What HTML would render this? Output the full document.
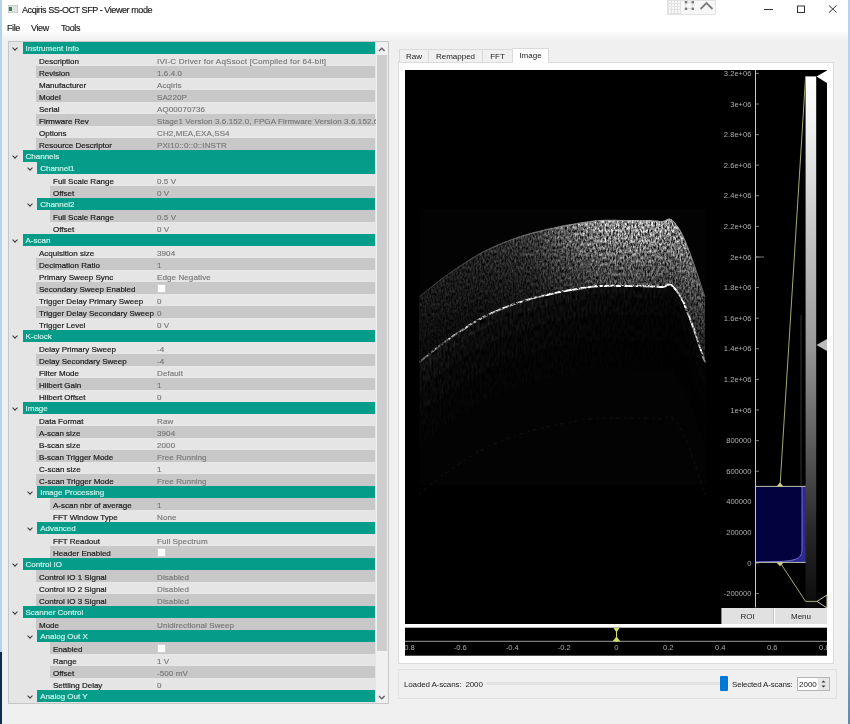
<!DOCTYPE html>
<html><head><meta charset="utf-8">
<style>
*{margin:0;padding:0;box-sizing:border-box}
html,body{width:850px;height:724px;overflow:hidden;background:#f0f0f0;font-family:"Liberation Sans",sans-serif;font-size:8px;position:relative}
.a{position:absolute}
#titlebar{position:absolute;left:0;top:0;width:850px;height:32px;background:#fff}
#grad{position:absolute;left:0;top:32px;width:850px;height:8px;background:linear-gradient(#fbfbfb,#f0f0f0)}
.bl{position:absolute;left:0;width:2px;background:#b4d3ee}
.br{position:absolute;right:0;top:0;width:2px;height:724px;background:linear-gradient(#b4d3ee 0%,#b0d0ec 75%,#7aa0c0 92%,#6088a8 100%)}
#title{position:absolute;left:22px;top:4.5px;font-size:9px;letter-spacing:-0.42px;color:#1a1a1a;white-space:pre;-webkit-text-stroke:0.15px #1a1a1a}
.menu{position:absolute;top:23px;font-size:9px;letter-spacing:-0.4px;color:#1a1a1a;-webkit-text-stroke:0.15px #1a1a1a}
#tree{position:absolute;left:7.5px;top:41px;width:381px;height:663px;background:#e6e5e6;border:1px solid #c6c6c6;overflow:hidden}
.hd{position:absolute;right:475px;height:12px;background:#059c8a;color:#c9f2ea;-webkit-text-stroke:0.2px #c9f2ea;line-height:14px;padding-left:3px;white-space:pre}
.row{position:absolute;right:475px;height:12px;line-height:15px;padding-left:3px;white-space:pre;color:#1a1a1a;-webkit-text-stroke:0.2px #1a1a1a}
.rl{background:#e6e5e6}
.rg{background:#c9c8c9}
.v{position:absolute;left:157px;height:12px;line-height:15px;color:#777;white-space:pre;letter-spacing:0.1px;-webkit-text-stroke:0.15px #777}
.cb{position:absolute;left:157px;width:9px;height:9px;background:#fff;border:1px solid #d0d0d0}
.chev{position:absolute;width:6px;height:4px}
.chev:before{content:"";position:absolute;left:1px;top:-2px;width:3px;height:3px;border-right:1.7px solid #383838;border-bottom:1.7px solid #383838;transform:rotate(45deg)}
#root{position:absolute;left:0;top:0;width:850px;height:724px;will-change:transform;background:#f0f0f0}
</style></head><body><div id="root">
<div id="titlebar"></div>
<div id="grad"></div>
<div class="bl" style="top:0;height:652px"></div>
<div class="bl" style="top:652px;height:72px;background:#0d2d4e"></div>
<div class="br"></div>
<!-- app icon -->
<div class="a" style="left:8px;top:5px;width:10px;height:8px;background:#dfe6e2;border:1px solid #c5cdc8"></div>
<div class="a" style="left:9px;top:7px;width:3px;height:4px;background:#3c7a5a"></div>
<div id="title">Acqiris SS-OCT SFP - Viewer mode</div>
<div class="menu" style="left:7px">File</div>
<div class="menu" style="left:31px">View</div>
<div class="menu" style="left:61px">Tools</div>
<!-- title controls -->
<div class="a" style="left:667px;top:0;width:49px;height:15px;border:1px solid #e3e3e3;background:#f7f7f7"></div>
<svg class="a" style="left:0;top:0" width="850" height="20">
 <g stroke="#e2e2e2" stroke-width="1" fill="none">
  <rect x="668.5" y="0.5" width="12" height="13"/>
  <line x1="668.5" y1="3.5" x2="680.5" y2="3.5"/><line x1="668.5" y1="6.5" x2="680.5" y2="6.5"/><line x1="668.5" y1="9.5" x2="680.5" y2="9.5"/>
  <line x1="671.5" y1="0" x2="671.5" y2="14"/><line x1="674.5" y1="0" x2="674.5" y2="14"/><line x1="677.5" y1="0" x2="677.5" y2="14"/>
 </g>
 <rect x="686" y="2.2" width="6.7" height="6.5" fill="none" stroke="#d8d8d8" stroke-width="0.8"/>
 <g fill="#7a7a7a"><rect x="684.8" y="1" width="2.4" height="2.4"/><rect x="691.6" y="1" width="2.4" height="2.4"/><rect x="684.8" y="7.6" width="2.4" height="2.4"/><rect x="691.6" y="7.6" width="2.4" height="2.4"/></g>
 <path d="M700.5 9l6-6 6 6" stroke="#7d7d7d" stroke-width="1.8" fill="none"/>
 <line x1="764" y1="9.5" x2="773" y2="9.5" stroke="#333" stroke-width="1"/>
 <rect x="797.5" y="6" width="7" height="6.5" stroke="#333" stroke-width="1" fill="none"/>
 <path d="M829 5.5l7.5 7M836.5 5.5l-7.5 7" stroke="#333" stroke-width="1"/>
</svg>

<div id="tree">
<div style="position:absolute;left:-8.5px;top:-42px;width:850px;height:724px">
<div class="hd" style="top:42.0px;left:22.5px">Instrument Info</div>
<div class="chev" style="top:47.5px;left:12.0px"></div>
<div class="row rl" style="top:54.0px;left:36.0px"><span class="k">Description</span></div>
<div class="v" style="top:54.0px;letter-spacing:0.22px">IVI-C Driver for AqSsoct [Compiled for 64-bit]</div>
<div class="row rg" style="top:66.0px;left:36.0px"><span class="k">Revision</span></div>
<div class="v" style="top:66.0px">1.6.4.0</div>
<div class="row rl" style="top:78.0px;left:36.0px"><span class="k">Manufacturer</span></div>
<div class="v" style="top:78.0px">Acqiris</div>
<div class="row rg" style="top:90.0px;left:36.0px"><span class="k">Model</span></div>
<div class="v" style="top:90.0px">SA220P</div>
<div class="row rl" style="top:102.0px;left:36.0px"><span class="k">Serial</span></div>
<div class="v" style="top:102.0px">AQ00070736</div>
<div class="row rg" style="top:114.0px;left:36.0px"><span class="k">Firmware Rev</span></div>
<div class="v" style="top:114.0px">Stage1 Version 3.6.152.0, FPGA Firmware Version 3.6.152.675</div>
<div class="row rl" style="top:126.0px;left:36.0px"><span class="k">Options</span></div>
<div class="v" style="top:126.0px">CH2,MEA,EXA,SS4</div>
<div class="row rg" style="top:138.0px;left:36.0px"><span class="k">Resource Descriptor</span></div>
<div class="v" style="top:138.0px">PXI10::0::0::INSTR</div>
<div class="hd" style="top:150.0px;left:22.5px">Channels</div>
<div class="chev" style="top:155.5px;left:12.0px"></div>
<div class="hd" style="top:162.0px;left:37.2px">Channel1</div>
<div class="chev" style="top:167.5px;left:26.5px"></div>
<div class="row rl" style="top:174.0px;left:50.0px"><span class="k">Full Scale Range</span></div>
<div class="v" style="top:174.0px">0.5 V</div>
<div class="row rg" style="top:186.0px;left:50.0px"><span class="k">Offset</span></div>
<div class="v" style="top:186.0px">0 V</div>
<div class="hd" style="top:198.0px;left:37.2px">Channel2</div>
<div class="chev" style="top:203.5px;left:26.5px"></div>
<div class="row rg" style="top:210.0px;left:50.0px"><span class="k">Full Scale Range</span></div>
<div class="v" style="top:210.0px">0.5 V</div>
<div class="row rl" style="top:222.0px;left:50.0px"><span class="k">Offset</span></div>
<div class="v" style="top:222.0px">0 V</div>
<div class="hd" style="top:234.0px;left:22.5px">A-scan</div>
<div class="chev" style="top:239.5px;left:12.0px"></div>
<div class="row rl" style="top:246.0px;left:36.0px"><span class="k">Acquisition size</span></div>
<div class="v" style="top:246.0px">3904</div>
<div class="row rg" style="top:258.0px;left:36.0px"><span class="k">Decimation Ratio</span></div>
<div class="v" style="top:258.0px">1</div>
<div class="row rl" style="top:270.0px;left:36.0px"><span class="k">Primary Sweep Sync</span></div>
<div class="v" style="top:270.0px">Edge Negative</div>
<div class="row rg" style="top:282.0px;left:36.0px"><span class="k">Secondary Sweep Enabled</span></div>
<div class="cb" style="top:284.0px"></div>
<div class="row rl" style="top:294.0px;left:36.0px"><span class="k">Trigger Delay Primary Sweep</span></div>
<div class="v" style="top:294.0px">0</div>
<div class="row rg" style="top:306.0px;left:36.0px"><span class="k">Trigger Delay Secondary Sweep</span></div>
<div class="v" style="top:306.0px">0</div>
<div class="row rl" style="top:318.0px;left:36.0px"><span class="k">Trigger Level</span></div>
<div class="v" style="top:318.0px">0 V</div>
<div class="hd" style="top:330.0px;left:22.5px">K-clock</div>
<div class="chev" style="top:335.5px;left:12.0px"></div>
<div class="row rl" style="top:342.0px;left:36.0px"><span class="k">Delay Primary Sweep</span></div>
<div class="v" style="top:342.0px">-4</div>
<div class="row rg" style="top:354.0px;left:36.0px"><span class="k">Delay Secondary Sweep</span></div>
<div class="v" style="top:354.0px">-4</div>
<div class="row rl" style="top:366.0px;left:36.0px"><span class="k">Filter Mode</span></div>
<div class="v" style="top:366.0px">Default</div>
<div class="row rg" style="top:378.0px;left:36.0px"><span class="k">Hilbert Gain</span></div>
<div class="v" style="top:378.0px">1</div>
<div class="row rl" style="top:390.0px;left:36.0px"><span class="k">Hilbert Offset</span></div>
<div class="v" style="top:390.0px">0</div>
<div class="hd" style="top:402.0px;left:22.5px">Image</div>
<div class="chev" style="top:407.5px;left:12.0px"></div>
<div class="row rl" style="top:414.0px;left:36.0px"><span class="k">Data Format</span></div>
<div class="v" style="top:414.0px">Raw</div>
<div class="row rg" style="top:426.0px;left:36.0px"><span class="k">A-scan size</span></div>
<div class="v" style="top:426.0px">3904</div>
<div class="row rl" style="top:438.0px;left:36.0px"><span class="k">B-scan size</span></div>
<div class="v" style="top:438.0px">2000</div>
<div class="row rg" style="top:450.0px;left:36.0px"><span class="k">B-scan Trigger Mode</span></div>
<div class="v" style="top:450.0px">Free Running</div>
<div class="row rl" style="top:462.0px;left:36.0px"><span class="k">C-scan size</span></div>
<div class="v" style="top:462.0px">1</div>
<div class="row rg" style="top:474.0px;left:36.0px"><span class="k">C-scan Trigger Mode</span></div>
<div class="v" style="top:474.0px">Free Running</div>
<div class="hd" style="top:486.0px;left:37.2px">Image Processing</div>
<div class="chev" style="top:491.5px;left:26.5px"></div>
<div class="row rg" style="top:498.0px;left:50.0px"><span class="k">A-scan nbr of average</span></div>
<div class="v" style="top:498.0px">1</div>
<div class="row rl" style="top:510.0px;left:50.0px"><span class="k">FFT Window Type</span></div>
<div class="v" style="top:510.0px">None</div>
<div class="hd" style="top:522.0px;left:37.2px">Advanced</div>
<div class="chev" style="top:527.5px;left:26.5px"></div>
<div class="row rl" style="top:534.0px;left:50.0px"><span class="k">FFT Readout</span></div>
<div class="v" style="top:534.0px">Full Spectrum</div>
<div class="row rg" style="top:546.0px;left:50.0px"><span class="k">Header Enabled</span></div>
<div class="cb" style="top:548.0px"></div>
<div class="hd" style="top:558.0px;left:22.5px">Control IO</div>
<div class="chev" style="top:563.5px;left:12.0px"></div>
<div class="row rg" style="top:570.0px;left:36.0px"><span class="k">Control IO 1 Signal</span></div>
<div class="v" style="top:570.0px">Disabled</div>
<div class="row rl" style="top:582.0px;left:36.0px"><span class="k">Control IO 2 Signal</span></div>
<div class="v" style="top:582.0px">Disabled</div>
<div class="row rg" style="top:594.0px;left:36.0px"><span class="k">Control IO 3 Signal</span></div>
<div class="v" style="top:594.0px">Disabled</div>
<div class="hd" style="top:606.0px;left:22.5px">Scanner Control</div>
<div class="chev" style="top:611.5px;left:12.0px"></div>
<div class="row rg" style="top:618.0px;left:36.0px"><span class="k">Mode</span></div>
<div class="v" style="top:618.0px">Unidirectional Sweep</div>
<div class="hd" style="top:630.0px;left:37.2px">Analog Out X</div>
<div class="chev" style="top:635.5px;left:26.5px"></div>
<div class="row rg" style="top:642.0px;left:50.0px"><span class="k">Enabled</span></div>
<div class="cb" style="top:644.0px"></div>
<div class="row rl" style="top:654.0px;left:50.0px"><span class="k">Range</span></div>
<div class="v" style="top:654.0px">1 V</div>
<div class="row rg" style="top:666.0px;left:50.0px"><span class="k">Offset</span></div>
<div class="v" style="top:666.0px">-500 mV</div>
<div class="row rl" style="top:678.0px;left:50.0px"><span class="k">Settling Delay</span></div>
<div class="v" style="top:678.0px">0</div>
<div class="hd" style="top:690.0px;left:37.2px">Analog Out Y</div>
<div class="chev" style="top:695.5px;left:26.5px"></div>
</div>
</div>
<!-- scrollbar -->
<div class="a" style="left:375.5px;top:42px;width:12px;height:661px;background:#f0f0f0"></div>
<div class="a" style="left:376.5px;top:55px;width:10px;height:596px;background:#cdcdcd"></div>
<svg class="a" style="left:370px;top:40px" width="20" height="670">
 <path d="M9 11l2.8-2.8 2.8 2.8" stroke="#606060" stroke-width="1.3" fill="none"/>
 <path d="M9 656l2.8 2.8 2.8-2.8" stroke="#606060" stroke-width="1.3" fill="none"/>
</svg>

<!-- tabs -->
<div class="a" style="left:399px;top:49px;width:30px;height:14px;background:#f0f0f0;border:1px solid #dadada;border-bottom:none;line-height:13px;text-align:center;color:#222">Raw</div>
<div class="a" style="left:428px;top:49px;width:55px;height:14px;background:#f0f0f0;border:1px solid #dadada;border-bottom:none;line-height:13px;text-align:center;color:#222">Remapped</div>
<div class="a" style="left:482px;top:49px;width:31px;height:14px;background:#f0f0f0;border:1px solid #dadada;border-bottom:none;line-height:13px;text-align:center;color:#222">FFT</div>
<div class="a" style="left:512px;top:48px;width:37px;height:15px;background:#fff;border:1px solid #dadada;border-bottom:none;line-height:14px;text-align:center;color:#222">Image</div>
<!-- panel -->
<div class="a" style="left:398px;top:62px;width:436px;height:602px;background:#fff;border:1px solid #dcdcdc"></div>
<div class="a" style="left:513px;top:62px;width:35px;height:2px;background:#fff"></div>

<!-- image view -->
<svg class="a" style="left:0;top:0" width="850" height="724" font-family="Liberation Sans" >
 <defs>
  <filter id="mod" filterUnits="userSpaceOnUse" x="405" y="200" width="320" height="200" color-interpolation-filters="sRGB">
   <feTurbulence type="fractalNoise" baseFrequency="0.6 0.3" numOctaves="3" seed="5" result="n"/>
   <feColorMatrix in="n" type="matrix" values="1.5 0 0 0 -0.25  1.5 0 0 0 -0.25  1.5 0 0 0 -0.25  0 0 0 0 1" result="g"/>
   <feComposite in="SourceGraphic" in2="g" operator="arithmetic" k1="1.9" k2="0" k3="0" k4="0"/>
  </filter>
  <filter id="mod2" filterUnits="userSpaceOnUse" x="405" y="250" width="320" height="280" color-interpolation-filters="sRGB">
   <feTurbulence type="fractalNoise" baseFrequency="0.5 0.16" numOctaves="2" seed="9" result="n"/>
   <feColorMatrix in="n" type="matrix" values="1.8 0 0 0 -0.4  1.8 0 0 0 -0.4  1.8 0 0 0 -0.4  0 0 0 0 1" result="g"/>
   <feComposite in="SourceGraphic" in2="g" operator="arithmetic" k1="1.9" k2="0" k3="0" k4="0"/>
  </filter>
  <filter id="mod3" filterUnits="userSpaceOnUse" x="405" y="200" width="320" height="200" color-interpolation-filters="sRGB">
   <feTurbulence type="fractalNoise" baseFrequency="0.35 0.35" numOctaves="2" seed="21" result="n"/>
   <feColorMatrix in="n" type="matrix" values="2 0 0 0 -0.45  2 0 0 0 -0.45  2 0 0 0 -0.45  0 0 0 0 1" result="g"/>
   <feComposite in="SourceGraphic" in2="g" operator="arithmetic" k1="1.8" k2="0" k3="0" k4="0"/>
  </filter>
  <clipPath id="tlclip"><rect x="405" y="627" width="422" height="29"/></clipPath>
  <clipPath id="band"><path d="M419.5 296.0 L421.7 294.2 L424.8 291.6 L428.5 288.6 L432.4 285.4 L436.4 282.3 L440.0 279.5 L443.4 277.0 L446.7 274.6 L450.1 272.2 L453.4 269.9 L456.7 267.7 L460.0 265.5 L463.2 263.4 L466.3 261.3 L469.4 259.2 L472.6 257.3 L475.7 255.4 L479.0 253.5 L482.3 251.7 L485.7 250.0 L489.1 248.3 L492.6 246.7 L496.2 245.1 L500.0 243.5 L503.9 241.9 L507.9 240.4 L512.1 238.8 L516.3 237.3 L520.6 235.9 L525.0 234.5 L529.5 233.2 L534.1 231.9 L538.9 230.8 L543.6 229.6 L548.4 228.5 L553.0 227.5 L557.6 226.5 L562.3 225.6 L566.9 224.7 L571.5 223.9 L575.9 223.2 L580.0 222.5 L583.8 221.9 L587.1 221.4 L590.4 220.9 L593.6 220.6 L597.1 220.2 L601.0 220.0 L605.4 219.8 L610.2 219.8 L615.2 219.8 L620.3 219.9 L625.3 219.9 L630.0 220.0 L634.6 220.1 L639.3 220.1 L643.8 220.2 L648.1 220.3 L651.9 220.4 L655.0 220.5 L657.3 220.6 L658.9 220.8 L660.1 220.9 L661.0 221.0 L661.9 221.1 L663.0 221.0 L664.3 220.6 L665.6 220.0 L666.9 219.2 L668.2 218.7 L669.6 218.5 L671.0 219.0 L672.6 220.1 L674.2 221.8 L675.9 223.8 L677.7 226.2 L679.4 228.8 L681.0 231.5 L682.6 234.5 L684.1 237.9 L685.7 241.5 L687.2 245.3 L688.6 249.0 L690.0 252.5 L691.3 255.8 L692.4 259.1 L693.6 262.3 L694.7 265.6 L695.8 268.9 L697.0 272.5 L698.4 276.5 L699.9 281.1 L701.4 285.8 L702.9 290.1 L704.1 293.8 L705.0 296.5 L705.0 361.5 L704.1 358.8 L702.9 355.1 L701.4 350.8 L699.9 346.1 L698.4 341.5 L697.0 337.5 L695.8 333.9 L694.7 330.6 L693.6 327.3 L692.4 324.1 L691.3 320.8 L690.0 317.5 L688.6 314.0 L687.2 310.3 L685.7 306.5 L684.1 302.9 L682.6 299.5 L681.0 296.5 L679.4 293.8 L677.7 291.2 L675.9 288.8 L674.2 286.8 L672.6 285.1 L671.0 284.0 L669.6 283.5 L668.2 283.7 L666.9 284.2 L665.6 285.0 L664.3 285.6 L663.0 286.0 L661.9 286.1 L661.0 286.0 L660.1 285.9 L658.9 285.8 L657.3 285.6 L655.0 285.5 L651.9 285.4 L648.1 285.3 L643.8 285.2 L639.3 285.1 L634.6 285.1 L630.0 285.0 L625.3 284.9 L620.3 284.9 L615.2 284.8 L610.2 284.8 L605.4 284.8 L601.0 285.0 L597.1 285.2 L593.6 285.6 L590.4 285.9 L587.1 286.4 L583.8 286.9 L580.0 287.5 L575.9 288.2 L571.5 288.9 L566.9 289.7 L562.3 290.6 L557.6 291.5 L553.0 292.5 L548.4 293.5 L543.6 294.6 L538.9 295.8 L534.1 296.9 L529.5 298.2 L525.0 299.5 L520.6 300.9 L516.3 302.3 L512.1 303.8 L507.9 305.4 L503.9 306.9 L500.0 308.5 L496.2 310.1 L492.6 311.7 L489.1 313.3 L485.7 315.0 L482.3 316.7 L479.0 318.5 L475.7 320.4 L472.6 322.3 L469.4 324.2 L466.3 326.3 L463.2 328.4 L460.0 330.5 L456.7 332.7 L453.4 334.9 L450.1 337.2 L446.7 339.6 L443.4 342.0 L440.0 344.5 L436.4 347.3 L432.4 350.4 L428.5 353.6 L424.8 356.6 L421.7 359.2 L419.5 361.0Z"/></clipPath>
<linearGradient id="bg0" gradientUnits="userSpaceOnUse" x1="420" y1="0" x2="706" y2="0"><stop offset="0.000" stop-color="rgb(27,27,27)"/><stop offset="0.210" stop-color="rgb(39,39,39)"/><stop offset="0.385" stop-color="rgb(62,62,62)"/><stop offset="0.507" stop-color="rgb(108,108,108)"/><stop offset="0.629" stop-color="rgb(159,159,159)"/><stop offset="0.769" stop-color="rgb(172,172,172)"/><stop offset="0.867" stop-color="rgb(164,164,164)"/><stop offset="0.913" stop-color="rgb(151,151,151)"/><stop offset="0.955" stop-color="rgb(110,110,110)"/><stop offset="1.000" stop-color="rgb(67,67,67)"/></linearGradient>
<linearGradient id="bg1" gradientUnits="userSpaceOnUse" x1="420" y1="0" x2="706" y2="0"><stop offset="0.000" stop-color="rgb(24,24,24)"/><stop offset="0.210" stop-color="rgb(34,34,34)"/><stop offset="0.385" stop-color="rgb(55,55,55)"/><stop offset="0.507" stop-color="rgb(96,96,96)"/><stop offset="0.629" stop-color="rgb(141,141,141)"/><stop offset="0.769" stop-color="rgb(153,153,153)"/><stop offset="0.867" stop-color="rgb(146,146,146)"/><stop offset="0.913" stop-color="rgb(134,134,134)"/><stop offset="0.955" stop-color="rgb(98,98,98)"/><stop offset="1.000" stop-color="rgb(60,60,60)"/></linearGradient>
<linearGradient id="bg2" gradientUnits="userSpaceOnUse" x1="420" y1="0" x2="706" y2="0"><stop offset="0.000" stop-color="rgb(21,21,21)"/><stop offset="0.210" stop-color="rgb(30,30,30)"/><stop offset="0.385" stop-color="rgb(48,48,48)"/><stop offset="0.507" stop-color="rgb(84,84,84)"/><stop offset="0.629" stop-color="rgb(123,123,123)"/><stop offset="0.769" stop-color="rgb(134,134,134)"/><stop offset="0.867" stop-color="rgb(128,128,128)"/><stop offset="0.913" stop-color="rgb(117,117,117)"/><stop offset="0.955" stop-color="rgb(86,86,86)"/><stop offset="1.000" stop-color="rgb(52,52,52)"/></linearGradient>
<linearGradient id="bg3" gradientUnits="userSpaceOnUse" x1="420" y1="0" x2="706" y2="0"><stop offset="0.000" stop-color="rgb(18,18,18)"/><stop offset="0.210" stop-color="rgb(26,26,26)"/><stop offset="0.385" stop-color="rgb(41,41,41)"/><stop offset="0.507" stop-color="rgb(72,72,72)"/><stop offset="0.629" stop-color="rgb(106,106,106)"/><stop offset="0.769" stop-color="rgb(115,115,115)"/><stop offset="0.867" stop-color="rgb(109,109,109)"/><stop offset="0.913" stop-color="rgb(100,100,100)"/><stop offset="0.955" stop-color="rgb(73,73,73)"/><stop offset="1.000" stop-color="rgb(45,45,45)"/></linearGradient>
<linearGradient id="bg4" gradientUnits="userSpaceOnUse" x1="420" y1="0" x2="706" y2="0"><stop offset="0.000" stop-color="rgb(15,15,15)"/><stop offset="0.210" stop-color="rgb(22,22,22)"/><stop offset="0.385" stop-color="rgb(34,34,34)"/><stop offset="0.507" stop-color="rgb(60,60,60)"/><stop offset="0.629" stop-color="rgb(89,89,89)"/><stop offset="0.769" stop-color="rgb(97,97,97)"/><stop offset="0.867" stop-color="rgb(92,92,92)"/><stop offset="0.913" stop-color="rgb(85,85,85)"/><stop offset="0.955" stop-color="rgb(62,62,62)"/><stop offset="1.000" stop-color="rgb(38,38,38)"/></linearGradient>
<linearGradient id="bg5" gradientUnits="userSpaceOnUse" x1="420" y1="0" x2="706" y2="0"><stop offset="0.000" stop-color="rgb(12,12,12)"/><stop offset="0.210" stop-color="rgb(18,18,18)"/><stop offset="0.385" stop-color="rgb(29,29,29)"/><stop offset="0.507" stop-color="rgb(51,51,51)"/><stop offset="0.629" stop-color="rgb(75,75,75)"/><stop offset="0.769" stop-color="rgb(81,81,81)"/><stop offset="0.867" stop-color="rgb(78,78,78)"/><stop offset="0.913" stop-color="rgb(71,71,71)"/><stop offset="0.955" stop-color="rgb(52,52,52)"/><stop offset="1.000" stop-color="rgb(32,32,32)"/></linearGradient>
<linearGradient id="bg6" gradientUnits="userSpaceOnUse" x1="420" y1="0" x2="706" y2="0"><stop offset="0.000" stop-color="rgb(11,11,11)"/><stop offset="0.210" stop-color="rgb(15,15,15)"/><stop offset="0.385" stop-color="rgb(25,25,25)"/><stop offset="0.507" stop-color="rgb(44,44,44)"/><stop offset="0.629" stop-color="rgb(64,64,64)"/><stop offset="0.769" stop-color="rgb(70,70,70)"/><stop offset="0.867" stop-color="rgb(67,67,67)"/><stop offset="0.913" stop-color="rgb(61,61,61)"/><stop offset="0.955" stop-color="rgb(45,45,45)"/><stop offset="1.000" stop-color="rgb(27,27,27)"/></linearGradient>
<linearGradient id="bw0" gradientUnits="userSpaceOnUse" x1="420" y1="0" x2="706" y2="0"><stop offset="0" stop-color="rgb(19,19,19)"/><stop offset="0.45" stop-color="rgb(17,17,17)"/><stop offset="1" stop-color="rgb(6,6,6)"/></linearGradient>
<linearGradient id="bw1" gradientUnits="userSpaceOnUse" x1="420" y1="0" x2="706" y2="0"><stop offset="0" stop-color="rgb(13,13,13)"/><stop offset="0.45" stop-color="rgb(11,11,11)"/><stop offset="1" stop-color="rgb(4,4,4)"/></linearGradient>
<linearGradient id="bw2" gradientUnits="userSpaceOnUse" x1="420" y1="0" x2="706" y2="0"><stop offset="0" stop-color="rgb(8,8,8)"/><stop offset="0.45" stop-color="rgb(7,7,7)"/><stop offset="1" stop-color="rgb(2,2,2)"/></linearGradient>
<linearGradient id="bw3" gradientUnits="userSpaceOnUse" x1="420" y1="0" x2="706" y2="0"><stop offset="0" stop-color="rgb(5,5,5)"/><stop offset="0.45" stop-color="rgb(4,4,4)"/><stop offset="1" stop-color="rgb(1,1,1)"/></linearGradient>
  <linearGradient id="tlg" gradientUnits="userSpaceOnUse" x1="420" y1="0" x2="706" y2="0"><stop offset="0" stop-color="#383838"/><stop offset="0.3" stop-color="#606060"/><stop offset="0.6" stop-color="#9a9a9a"/><stop offset="0.88" stop-color="#a8a8a8"/><stop offset="1" stop-color="#505050"/></linearGradient>
  <linearGradient id="blg" gradientUnits="userSpaceOnUse" x1="420" y1="0" x2="706" y2="0"><stop offset="0" stop-color="#585858"/><stop offset="0.25" stop-color="#9a9a9a"/><stop offset="0.55" stop-color="#dcdcdc"/><stop offset="0.88" stop-color="#dadada"/><stop offset="1" stop-color="#909090"/></linearGradient>
  <linearGradient id="lut" x1="0" y1="0" x2="0" y2="1">
   <stop offset="0" stop-color="#fff"/>
   <stop offset="0.08" stop-color="#f4f4f4"/>
   <stop offset="0.5" stop-color="#9a9a9a"/>
   <stop offset="0.85" stop-color="#2a2a2a"/>
   <stop offset="1" stop-color="#0a0a0a"/>
  </linearGradient>
 </defs>
 <rect x="405" y="70" width="422" height="554" fill="#000"/>
 <rect x="405" y="627.7" width="422" height="28" fill="#000"/>
 <!-- faint image bg -->
 <rect x="419.5" y="209" width="287" height="276" fill="#030303"/>
 <!-- band base -->
 <g filter="url(#mod2)">
<path d="M419.5 360.0 L421.7 358.2 L424.8 355.6 L428.5 352.6 L432.4 349.4 L436.4 346.3 L440.0 343.5 L443.4 341.0 L446.7 338.6 L450.1 336.2 L453.4 333.9 L456.7 331.7 L460.0 329.5 L463.2 327.4 L466.3 325.3 L469.4 323.2 L472.6 321.3 L475.7 319.4 L479.0 317.5 L482.3 315.7 L485.7 314.0 L489.1 312.3 L492.6 310.7 L496.2 309.1 L500.0 307.5 L503.9 305.9 L507.9 304.4 L512.1 302.8 L516.3 301.3 L520.6 299.9 L525.0 298.5 L529.5 297.2 L534.1 295.9 L538.9 294.8 L543.6 293.6 L548.4 292.5 L553.0 291.5 L557.6 290.5 L562.3 289.6 L566.9 288.7 L571.5 287.9 L575.9 287.2 L580.0 286.5 L583.8 285.9 L587.1 285.4 L590.4 284.9 L593.6 284.6 L597.1 284.2 L601.0 284.0 L605.4 283.8 L610.2 283.8 L615.2 283.8 L620.3 283.9 L625.3 283.9 L630.0 284.0 L634.6 284.1 L639.3 284.1 L643.8 284.2 L648.1 284.3 L651.9 284.4 L655.0 284.5 L657.3 284.6 L658.9 284.8 L660.1 284.9 L661.0 285.0 L661.9 285.1 L663.0 285.0 L664.3 284.6 L665.6 284.0 L666.9 283.2 L668.2 282.7 L669.6 282.5 L671.0 283.0 L672.6 284.1 L674.2 285.8 L675.9 287.8 L677.7 290.2 L679.4 292.8 L681.0 295.5 L682.6 298.5 L684.1 301.9 L685.7 305.5 L687.2 309.3 L688.6 313.0 L690.0 316.5 L691.3 319.8 L692.4 323.1 L693.6 326.3 L694.7 329.6 L695.8 332.9 L697.0 336.5 L698.4 340.5 L699.9 345.1 L701.4 349.8 L702.9 354.1 L704.1 357.8 L705.0 360.5 L705.0 374.5 L704.1 371.8 L702.9 368.1 L701.4 363.8 L699.9 359.1 L698.4 354.5 L697.0 350.5 L695.8 346.9 L694.7 343.6 L693.6 340.3 L692.4 337.1 L691.3 333.8 L690.0 330.5 L688.6 327.0 L687.2 323.3 L685.7 319.5 L684.1 315.9 L682.6 312.5 L681.0 309.5 L679.4 306.8 L677.7 304.2 L675.9 301.8 L674.2 299.8 L672.6 298.1 L671.0 297.0 L669.6 296.5 L668.2 296.7 L666.9 297.2 L665.6 298.0 L664.3 298.6 L663.0 299.0 L661.9 299.1 L661.0 299.0 L660.1 298.9 L658.9 298.8 L657.3 298.6 L655.0 298.5 L651.9 298.4 L648.1 298.3 L643.8 298.2 L639.3 298.1 L634.6 298.1 L630.0 298.0 L625.3 297.9 L620.3 297.9 L615.2 297.8 L610.2 297.8 L605.4 297.8 L601.0 298.0 L597.1 298.2 L593.6 298.6 L590.4 298.9 L587.1 299.4 L583.8 299.9 L580.0 300.5 L575.9 301.2 L571.5 301.9 L566.9 302.7 L562.3 303.6 L557.6 304.5 L553.0 305.5 L548.4 306.5 L543.6 307.6 L538.9 308.8 L534.1 309.9 L529.5 311.2 L525.0 312.5 L520.6 313.9 L516.3 315.3 L512.1 316.8 L507.9 318.4 L503.9 319.9 L500.0 321.5 L496.2 323.1 L492.6 324.7 L489.1 326.3 L485.7 328.0 L482.3 329.7 L479.0 331.5 L475.7 333.4 L472.6 335.3 L469.4 337.2 L466.3 339.3 L463.2 341.4 L460.0 343.5 L456.7 345.7 L453.4 347.9 L450.1 350.2 L446.7 352.6 L443.4 355.0 L440.0 357.5 L436.4 360.3 L432.4 363.4 L428.5 366.6 L424.8 369.6 L421.7 372.2 L419.5 374.0Z" fill="url(#bw0)"/><path d="M419.5 374.0 L421.7 372.2 L424.8 369.6 L428.5 366.6 L432.4 363.4 L436.4 360.3 L440.0 357.5 L443.4 355.0 L446.7 352.6 L450.1 350.2 L453.4 347.9 L456.7 345.7 L460.0 343.5 L463.2 341.4 L466.3 339.3 L469.4 337.2 L472.6 335.3 L475.7 333.4 L479.0 331.5 L482.3 329.7 L485.7 328.0 L489.1 326.3 L492.6 324.7 L496.2 323.1 L500.0 321.5 L503.9 319.9 L507.9 318.4 L512.1 316.8 L516.3 315.3 L520.6 313.9 L525.0 312.5 L529.5 311.2 L534.1 309.9 L538.9 308.8 L543.6 307.6 L548.4 306.5 L553.0 305.5 L557.6 304.5 L562.3 303.6 L566.9 302.7 L571.5 301.9 L575.9 301.2 L580.0 300.5 L583.8 299.9 L587.1 299.4 L590.4 298.9 L593.6 298.6 L597.1 298.2 L601.0 298.0 L605.4 297.8 L610.2 297.8 L615.2 297.8 L620.3 297.9 L625.3 297.9 L630.0 298.0 L634.6 298.1 L639.3 298.1 L643.8 298.2 L648.1 298.3 L651.9 298.4 L655.0 298.5 L657.3 298.6 L658.9 298.8 L660.1 298.9 L661.0 299.0 L661.9 299.1 L663.0 299.0 L664.3 298.6 L665.6 298.0 L666.9 297.2 L668.2 296.7 L669.6 296.5 L671.0 297.0 L672.6 298.1 L674.2 299.8 L675.9 301.8 L677.7 304.2 L679.4 306.8 L681.0 309.5 L682.6 312.5 L684.1 315.9 L685.7 319.5 L687.2 323.3 L688.6 327.0 L690.0 330.5 L691.3 333.8 L692.4 337.1 L693.6 340.3 L694.7 343.6 L695.8 346.9 L697.0 350.5 L698.4 354.5 L699.9 359.1 L701.4 363.8 L702.9 368.1 L704.1 371.8 L705.0 374.5 L705.0 391.5 L704.1 388.8 L702.9 385.1 L701.4 380.8 L699.9 376.1 L698.4 371.5 L697.0 367.5 L695.8 363.9 L694.7 360.6 L693.6 357.3 L692.4 354.1 L691.3 350.8 L690.0 347.5 L688.6 344.0 L687.2 340.3 L685.7 336.5 L684.1 332.9 L682.6 329.5 L681.0 326.5 L679.4 323.8 L677.7 321.2 L675.9 318.8 L674.2 316.8 L672.6 315.1 L671.0 314.0 L669.6 313.5 L668.2 313.7 L666.9 314.2 L665.6 315.0 L664.3 315.6 L663.0 316.0 L661.9 316.1 L661.0 316.0 L660.1 315.9 L658.9 315.8 L657.3 315.6 L655.0 315.5 L651.9 315.4 L648.1 315.3 L643.8 315.2 L639.3 315.1 L634.6 315.1 L630.0 315.0 L625.3 314.9 L620.3 314.9 L615.2 314.8 L610.2 314.8 L605.4 314.8 L601.0 315.0 L597.1 315.2 L593.6 315.6 L590.4 315.9 L587.1 316.4 L583.8 316.9 L580.0 317.5 L575.9 318.2 L571.5 318.9 L566.9 319.7 L562.3 320.6 L557.6 321.5 L553.0 322.5 L548.4 323.5 L543.6 324.6 L538.9 325.8 L534.1 326.9 L529.5 328.2 L525.0 329.5 L520.6 330.9 L516.3 332.3 L512.1 333.8 L507.9 335.4 L503.9 336.9 L500.0 338.5 L496.2 340.1 L492.6 341.7 L489.1 343.3 L485.7 345.0 L482.3 346.7 L479.0 348.5 L475.7 350.4 L472.6 352.3 L469.4 354.2 L466.3 356.3 L463.2 358.4 L460.0 360.5 L456.7 362.7 L453.4 364.9 L450.1 367.2 L446.7 369.6 L443.4 372.0 L440.0 374.5 L436.4 377.3 L432.4 380.4 L428.5 383.6 L424.8 386.6 L421.7 389.2 L419.5 391.0Z" fill="url(#bw1)"/><path d="M419.5 391.0 L421.7 389.2 L424.8 386.6 L428.5 383.6 L432.4 380.4 L436.4 377.3 L440.0 374.5 L443.4 372.0 L446.7 369.6 L450.1 367.2 L453.4 364.9 L456.7 362.7 L460.0 360.5 L463.2 358.4 L466.3 356.3 L469.4 354.2 L472.6 352.3 L475.7 350.4 L479.0 348.5 L482.3 346.7 L485.7 345.0 L489.1 343.3 L492.6 341.7 L496.2 340.1 L500.0 338.5 L503.9 336.9 L507.9 335.4 L512.1 333.8 L516.3 332.3 L520.6 330.9 L525.0 329.5 L529.5 328.2 L534.1 326.9 L538.9 325.8 L543.6 324.6 L548.4 323.5 L553.0 322.5 L557.6 321.5 L562.3 320.6 L566.9 319.7 L571.5 318.9 L575.9 318.2 L580.0 317.5 L583.8 316.9 L587.1 316.4 L590.4 315.9 L593.6 315.6 L597.1 315.2 L601.0 315.0 L605.4 314.8 L610.2 314.8 L615.2 314.8 L620.3 314.9 L625.3 314.9 L630.0 315.0 L634.6 315.1 L639.3 315.1 L643.8 315.2 L648.1 315.3 L651.9 315.4 L655.0 315.5 L657.3 315.6 L658.9 315.8 L660.1 315.9 L661.0 316.0 L661.9 316.1 L663.0 316.0 L664.3 315.6 L665.6 315.0 L666.9 314.2 L668.2 313.7 L669.6 313.5 L671.0 314.0 L672.6 315.1 L674.2 316.8 L675.9 318.8 L677.7 321.2 L679.4 323.8 L681.0 326.5 L682.6 329.5 L684.1 332.9 L685.7 336.5 L687.2 340.3 L688.6 344.0 L690.0 347.5 L691.3 350.8 L692.4 354.1 L693.6 357.3 L694.7 360.6 L695.8 363.9 L697.0 367.5 L698.4 371.5 L699.9 376.1 L701.4 380.8 L702.9 385.1 L704.1 388.8 L705.0 391.5 L705.0 416.5 L704.1 413.8 L702.9 410.1 L701.4 405.8 L699.9 401.1 L698.4 396.5 L697.0 392.5 L695.8 388.9 L694.7 385.6 L693.6 382.3 L692.4 379.1 L691.3 375.8 L690.0 372.5 L688.6 369.0 L687.2 365.3 L685.7 361.5 L684.1 357.9 L682.6 354.5 L681.0 351.5 L679.4 348.8 L677.7 346.2 L675.9 343.8 L674.2 341.8 L672.6 340.1 L671.0 339.0 L669.6 338.5 L668.2 338.7 L666.9 339.2 L665.6 340.0 L664.3 340.6 L663.0 341.0 L661.9 341.1 L661.0 341.0 L660.1 340.9 L658.9 340.8 L657.3 340.6 L655.0 340.5 L651.9 340.4 L648.1 340.3 L643.8 340.2 L639.3 340.1 L634.6 340.1 L630.0 340.0 L625.3 339.9 L620.3 339.9 L615.2 339.8 L610.2 339.8 L605.4 339.8 L601.0 340.0 L597.1 340.2 L593.6 340.6 L590.4 340.9 L587.1 341.4 L583.8 341.9 L580.0 342.5 L575.9 343.2 L571.5 343.9 L566.9 344.7 L562.3 345.6 L557.6 346.5 L553.0 347.5 L548.4 348.5 L543.6 349.6 L538.9 350.8 L534.1 351.9 L529.5 353.2 L525.0 354.5 L520.6 355.9 L516.3 357.3 L512.1 358.8 L507.9 360.4 L503.9 361.9 L500.0 363.5 L496.2 365.1 L492.6 366.7 L489.1 368.3 L485.7 370.0 L482.3 371.7 L479.0 373.5 L475.7 375.4 L472.6 377.3 L469.4 379.2 L466.3 381.3 L463.2 383.4 L460.0 385.5 L456.7 387.7 L453.4 389.9 L450.1 392.2 L446.7 394.6 L443.4 397.0 L440.0 399.5 L436.4 402.3 L432.4 405.4 L428.5 408.6 L424.8 411.6 L421.7 414.2 L419.5 416.0Z" fill="url(#bw2)"/><path d="M419.5 416.0 L421.7 414.2 L424.8 411.6 L428.5 408.6 L432.4 405.4 L436.4 402.3 L440.0 399.5 L443.4 397.0 L446.7 394.6 L450.1 392.2 L453.4 389.9 L456.7 387.7 L460.0 385.5 L463.2 383.4 L466.3 381.3 L469.4 379.2 L472.6 377.3 L475.7 375.4 L479.0 373.5 L482.3 371.7 L485.7 370.0 L489.1 368.3 L492.6 366.7 L496.2 365.1 L500.0 363.5 L503.9 361.9 L507.9 360.4 L512.1 358.8 L516.3 357.3 L520.6 355.9 L525.0 354.5 L529.5 353.2 L534.1 351.9 L538.9 350.8 L543.6 349.6 L548.4 348.5 L553.0 347.5 L557.6 346.5 L562.3 345.6 L566.9 344.7 L571.5 343.9 L575.9 343.2 L580.0 342.5 L583.8 341.9 L587.1 341.4 L590.4 340.9 L593.6 340.6 L597.1 340.2 L601.0 340.0 L605.4 339.8 L610.2 339.8 L615.2 339.8 L620.3 339.9 L625.3 339.9 L630.0 340.0 L634.6 340.1 L639.3 340.1 L643.8 340.2 L648.1 340.3 L651.9 340.4 L655.0 340.5 L657.3 340.6 L658.9 340.8 L660.1 340.9 L661.0 341.0 L661.9 341.1 L663.0 341.0 L664.3 340.6 L665.6 340.0 L666.9 339.2 L668.2 338.7 L669.6 338.5 L671.0 339.0 L672.6 340.1 L674.2 341.8 L675.9 343.8 L677.7 346.2 L679.4 348.8 L681.0 351.5 L682.6 354.5 L684.1 357.9 L685.7 361.5 L687.2 365.3 L688.6 369.0 L690.0 372.5 L691.3 375.8 L692.4 379.1 L693.6 382.3 L694.7 385.6 L695.8 388.9 L697.0 392.5 L698.4 396.5 L699.9 401.1 L701.4 405.8 L702.9 410.1 L704.1 413.8 L705.0 416.5 L705.0 446.5 L704.1 443.8 L702.9 440.1 L701.4 435.8 L699.9 431.1 L698.4 426.5 L697.0 422.5 L695.8 418.9 L694.7 415.6 L693.6 412.3 L692.4 409.1 L691.3 405.8 L690.0 402.5 L688.6 399.0 L687.2 395.3 L685.7 391.5 L684.1 387.9 L682.6 384.5 L681.0 381.5 L679.4 378.8 L677.7 376.2 L675.9 373.8 L674.2 371.8 L672.6 370.1 L671.0 369.0 L669.6 368.5 L668.2 368.7 L666.9 369.2 L665.6 370.0 L664.3 370.6 L663.0 371.0 L661.9 371.1 L661.0 371.0 L660.1 370.9 L658.9 370.8 L657.3 370.6 L655.0 370.5 L651.9 370.4 L648.1 370.3 L643.8 370.2 L639.3 370.1 L634.6 370.1 L630.0 370.0 L625.3 369.9 L620.3 369.9 L615.2 369.8 L610.2 369.8 L605.4 369.8 L601.0 370.0 L597.1 370.2 L593.6 370.6 L590.4 370.9 L587.1 371.4 L583.8 371.9 L580.0 372.5 L575.9 373.2 L571.5 373.9 L566.9 374.7 L562.3 375.6 L557.6 376.5 L553.0 377.5 L548.4 378.5 L543.6 379.6 L538.9 380.8 L534.1 381.9 L529.5 383.2 L525.0 384.5 L520.6 385.9 L516.3 387.3 L512.1 388.8 L507.9 390.4 L503.9 391.9 L500.0 393.5 L496.2 395.1 L492.6 396.7 L489.1 398.3 L485.7 400.0 L482.3 401.7 L479.0 403.5 L475.7 405.4 L472.6 407.3 L469.4 409.2 L466.3 411.3 L463.2 413.4 L460.0 415.5 L456.7 417.7 L453.4 419.9 L450.1 422.2 L446.7 424.6 L443.4 427.0 L440.0 429.5 L436.4 432.3 L432.4 435.4 L428.5 438.6 L424.8 441.6 L421.7 444.2 L419.5 446.0Z" fill="url(#bw3)"/>
 </g>
 <path d="M419.5 494.0 L421.7 492.2 L424.8 489.6 L428.5 486.6 L432.4 483.4 L436.4 480.3 L440.0 477.5 L443.4 475.0 L446.7 472.6 L450.1 470.2 L453.4 467.9 L456.7 465.7 L460.0 463.5 L463.2 461.4 L466.3 459.3 L469.4 457.2 L472.6 455.3 L475.7 453.4 L479.0 451.5 L482.3 449.7 L485.7 448.0 L489.1 446.3 L492.6 444.7 L496.2 443.1 L500.0 441.5 L503.9 439.9 L507.9 438.4 L512.1 436.8 L516.3 435.3 L520.6 433.9 L525.0 432.5 L529.5 431.2 L534.1 429.9 L538.9 428.8 L543.6 427.6 L548.4 426.5 L553.0 425.5 L557.6 424.5 L562.3 423.6 L566.9 422.7 L571.5 421.9 L575.9 421.2 L580.0 420.5 L583.8 419.9 L587.1 419.4 L590.4 418.9 L593.6 418.6 L597.1 418.2 L601.0 418.0 L605.4 417.8 L610.2 417.8 L615.2 417.8 L620.3 417.9 L625.3 417.9 L630.0 418.0 L634.6 418.1 L639.3 418.1 L643.8 418.2 L648.1 418.3 L651.9 418.4 L655.0 418.5 L657.3 418.6 L658.9 418.8 L660.1 418.9 L661.0 419.0 L661.9 419.1 L663.0 419.0 L664.3 418.6 L665.6 418.0 L666.9 417.2 L668.2 416.7 L669.6 416.5 L671.0 417.0 L672.6 418.1 L674.2 419.8 L675.9 421.8 L677.7 424.2 L679.4 426.8 L681.0 429.5 L682.6 432.5 L684.1 435.9 L685.7 439.5 L687.2 443.3 L688.6 447.0 L690.0 450.5 L691.3 453.8 L692.4 457.1 L693.6 460.3 L694.7 463.6 L695.8 466.9 L697.0 470.5 L698.4 474.5 L699.9 479.1 L701.4 483.8 L702.9 488.1 L704.1 491.8 L705.0 494.5" stroke="#101010" stroke-width="1.2" stroke-dasharray="2 3 4 5" fill="none"/>
 <g filter="url(#mod)">
<path d="M419.5 296.0 L421.7 294.2 L424.8 291.6 L428.5 288.6 L432.4 285.4 L436.4 282.3 L440.0 279.5 L443.4 277.0 L446.7 274.6 L450.1 272.2 L453.4 269.9 L456.7 267.7 L460.0 265.5 L463.2 263.4 L466.3 261.3 L469.4 259.2 L472.6 257.3 L475.7 255.4 L479.0 253.5 L482.3 251.7 L485.7 250.0 L489.1 248.3 L492.6 246.7 L496.2 245.1 L500.0 243.5 L503.9 241.9 L507.9 240.4 L512.1 238.8 L516.3 237.3 L520.6 235.9 L525.0 234.5 L529.5 233.2 L534.1 231.9 L538.9 230.8 L543.6 229.6 L548.4 228.5 L553.0 227.5 L557.6 226.5 L562.3 225.6 L566.9 224.7 L571.5 223.9 L575.9 223.2 L580.0 222.5 L583.8 221.9 L587.1 221.4 L590.4 220.9 L593.6 220.6 L597.1 220.2 L601.0 220.0 L605.4 219.8 L610.2 219.8 L615.2 219.8 L620.3 219.9 L625.3 219.9 L630.0 220.0 L634.6 220.1 L639.3 220.1 L643.8 220.2 L648.1 220.3 L651.9 220.4 L655.0 220.5 L657.3 220.6 L658.9 220.8 L660.1 220.9 L661.0 221.0 L661.9 221.1 L663.0 221.0 L664.3 220.6 L665.6 220.0 L666.9 219.2 L668.2 218.7 L669.6 218.5 L671.0 219.0 L672.6 220.1 L674.2 221.8 L675.9 223.8 L677.7 226.2 L679.4 228.8 L681.0 231.5 L682.6 234.5 L684.1 237.9 L685.7 241.5 L687.2 245.3 L688.6 249.0 L690.0 252.5 L691.3 255.8 L692.4 259.1 L693.6 262.3 L694.7 265.6 L695.8 268.9 L697.0 272.5 L698.4 276.5 L699.9 281.1 L701.4 285.8 L702.9 290.1 L704.1 293.8 L705.0 296.5 L705.0 361.5 L704.1 358.8 L702.9 355.1 L701.4 350.8 L699.9 346.1 L698.4 341.5 L697.0 337.5 L695.8 333.9 L694.7 330.6 L693.6 327.3 L692.4 324.1 L691.3 320.8 L690.0 317.5 L688.6 314.0 L687.2 310.3 L685.7 306.5 L684.1 302.9 L682.6 299.5 L681.0 296.5 L679.4 293.8 L677.7 291.2 L675.9 288.8 L674.2 286.8 L672.6 285.1 L671.0 284.0 L669.6 283.5 L668.2 283.7 L666.9 284.2 L665.6 285.0 L664.3 285.6 L663.0 286.0 L661.9 286.1 L661.0 286.0 L660.1 285.9 L658.9 285.8 L657.3 285.6 L655.0 285.5 L651.9 285.4 L648.1 285.3 L643.8 285.2 L639.3 285.1 L634.6 285.1 L630.0 285.0 L625.3 284.9 L620.3 284.9 L615.2 284.8 L610.2 284.8 L605.4 284.8 L601.0 285.0 L597.1 285.2 L593.6 285.6 L590.4 285.9 L587.1 286.4 L583.8 286.9 L580.0 287.5 L575.9 288.2 L571.5 288.9 L566.9 289.7 L562.3 290.6 L557.6 291.5 L553.0 292.5 L548.4 293.5 L543.6 294.6 L538.9 295.8 L534.1 296.9 L529.5 298.2 L525.0 299.5 L520.6 300.9 L516.3 302.3 L512.1 303.8 L507.9 305.4 L503.9 306.9 L500.0 308.5 L496.2 310.1 L492.6 311.7 L489.1 313.3 L485.7 315.0 L482.3 316.7 L479.0 318.5 L475.7 320.4 L472.6 322.3 L469.4 324.2 L466.3 326.3 L463.2 328.4 L460.0 330.5 L456.7 332.7 L453.4 334.9 L450.1 337.2 L446.7 339.6 L443.4 342.0 L440.0 344.5 L436.4 347.3 L432.4 350.4 L428.5 353.6 L424.8 356.6 L421.7 359.2 L419.5 361.0Z" fill="url(#bg0)"/>
<path d="M419.5 298.5 L421.7 296.7 L424.8 294.1 L428.5 291.1 L432.4 287.9 L436.4 284.8 L440.0 282.0 L443.4 279.5 L446.7 277.1 L450.1 274.7 L453.4 272.4 L456.7 270.2 L460.0 268.0 L463.2 265.9 L466.3 263.8 L469.4 261.8 L472.6 259.8 L475.7 257.9 L479.0 256.0 L482.3 254.2 L485.7 252.5 L489.1 250.8 L492.6 249.2 L496.2 247.6 L500.0 246.0 L503.9 244.4 L507.9 242.9 L512.1 241.3 L516.3 239.8 L520.6 238.4 L525.0 237.0 L529.5 235.7 L534.1 234.4 L538.9 233.2 L543.6 232.1 L548.4 231.0 L553.0 230.0 L557.6 229.0 L562.3 228.1 L566.9 227.2 L571.5 226.4 L575.9 225.7 L580.0 225.0 L583.8 224.4 L587.1 223.9 L590.4 223.4 L593.6 223.1 L597.1 222.7 L601.0 222.5 L605.4 222.3 L610.2 222.3 L615.2 222.3 L620.3 222.4 L625.3 222.4 L630.0 222.5 L634.6 222.6 L639.3 222.6 L643.8 222.7 L648.1 222.8 L651.9 222.9 L655.0 223.0 L657.3 223.1 L658.9 223.3 L660.1 223.4 L661.0 223.5 L661.9 223.6 L663.0 223.5 L664.3 223.1 L665.6 222.5 L666.9 221.8 L668.2 221.2 L669.6 221.0 L671.0 221.5 L672.6 222.6 L674.2 224.3 L675.9 226.3 L677.7 228.7 L679.4 231.3 L681.0 234.0 L682.6 237.0 L684.1 240.4 L685.7 244.0 L687.2 247.8 L688.6 251.5 L690.0 255.0 L691.3 258.3 L692.4 261.6 L693.6 264.8 L694.7 268.1 L695.8 271.4 L697.0 275.0 L698.4 279.0 L699.9 283.6 L701.4 288.2 L702.9 292.6 L704.1 296.3 L705.0 299.0 L705.0 361.5 L704.1 358.8 L702.9 355.1 L701.4 350.8 L699.9 346.1 L698.4 341.5 L697.0 337.5 L695.8 333.9 L694.7 330.6 L693.6 327.3 L692.4 324.1 L691.3 320.8 L690.0 317.5 L688.6 314.0 L687.2 310.3 L685.7 306.5 L684.1 302.9 L682.6 299.5 L681.0 296.5 L679.4 293.8 L677.7 291.2 L675.9 288.8 L674.2 286.8 L672.6 285.1 L671.0 284.0 L669.6 283.5 L668.2 283.7 L666.9 284.2 L665.6 285.0 L664.3 285.6 L663.0 286.0 L661.9 286.1 L661.0 286.0 L660.1 285.9 L658.9 285.8 L657.3 285.6 L655.0 285.5 L651.9 285.4 L648.1 285.3 L643.8 285.2 L639.3 285.1 L634.6 285.1 L630.0 285.0 L625.3 284.9 L620.3 284.9 L615.2 284.8 L610.2 284.8 L605.4 284.8 L601.0 285.0 L597.1 285.2 L593.6 285.6 L590.4 285.9 L587.1 286.4 L583.8 286.9 L580.0 287.5 L575.9 288.2 L571.5 288.9 L566.9 289.7 L562.3 290.6 L557.6 291.5 L553.0 292.5 L548.4 293.5 L543.6 294.6 L538.9 295.8 L534.1 296.9 L529.5 298.2 L525.0 299.5 L520.6 300.9 L516.3 302.3 L512.1 303.8 L507.9 305.4 L503.9 306.9 L500.0 308.5 L496.2 310.1 L492.6 311.7 L489.1 313.3 L485.7 315.0 L482.3 316.7 L479.0 318.5 L475.7 320.4 L472.6 322.3 L469.4 324.2 L466.3 326.3 L463.2 328.4 L460.0 330.5 L456.7 332.7 L453.4 334.9 L450.1 337.2 L446.7 339.6 L443.4 342.0 L440.0 344.5 L436.4 347.3 L432.4 350.4 L428.5 353.6 L424.8 356.6 L421.7 359.2 L419.5 361.0Z" fill="url(#bg1)"/>
<path d="M419.5 308.0 L421.7 306.2 L424.8 303.6 L428.5 300.6 L432.4 297.4 L436.4 294.3 L440.0 291.5 L443.4 289.0 L446.7 286.6 L450.1 284.2 L453.4 281.9 L456.7 279.7 L460.0 277.5 L463.2 275.4 L466.3 273.3 L469.4 271.2 L472.6 269.3 L475.7 267.4 L479.0 265.5 L482.3 263.7 L485.7 262.0 L489.1 260.3 L492.6 258.7 L496.2 257.1 L500.0 255.5 L503.9 253.9 L507.9 252.4 L512.1 250.8 L516.3 249.3 L520.6 247.9 L525.0 246.5 L529.5 245.2 L534.1 243.9 L538.9 242.8 L543.6 241.6 L548.4 240.5 L553.0 239.5 L557.6 238.5 L562.3 237.6 L566.9 236.7 L571.5 235.9 L575.9 235.2 L580.0 234.5 L583.8 233.9 L587.1 233.4 L590.4 232.9 L593.6 232.6 L597.1 232.2 L601.0 232.0 L605.4 231.8 L610.2 231.8 L615.2 231.8 L620.3 231.9 L625.3 231.9 L630.0 232.0 L634.6 232.1 L639.3 232.1 L643.8 232.2 L648.1 232.3 L651.9 232.4 L655.0 232.5 L657.3 232.6 L658.9 232.8 L660.1 232.9 L661.0 233.0 L661.9 233.1 L663.0 233.0 L664.3 232.6 L665.6 232.0 L666.9 231.2 L668.2 230.7 L669.6 230.5 L671.0 231.0 L672.6 232.1 L674.2 233.8 L675.9 235.8 L677.7 238.2 L679.4 240.8 L681.0 243.5 L682.6 246.5 L684.1 249.9 L685.7 253.5 L687.2 257.3 L688.6 261.0 L690.0 264.5 L691.3 267.8 L692.4 271.1 L693.6 274.3 L694.7 277.6 L695.8 280.9 L697.0 284.5 L698.4 288.5 L699.9 293.1 L701.4 297.8 L702.9 302.1 L704.1 305.8 L705.0 308.5 L705.0 361.5 L704.1 358.8 L702.9 355.1 L701.4 350.8 L699.9 346.1 L698.4 341.5 L697.0 337.5 L695.8 333.9 L694.7 330.6 L693.6 327.3 L692.4 324.1 L691.3 320.8 L690.0 317.5 L688.6 314.0 L687.2 310.3 L685.7 306.5 L684.1 302.9 L682.6 299.5 L681.0 296.5 L679.4 293.8 L677.7 291.2 L675.9 288.8 L674.2 286.8 L672.6 285.1 L671.0 284.0 L669.6 283.5 L668.2 283.7 L666.9 284.2 L665.6 285.0 L664.3 285.6 L663.0 286.0 L661.9 286.1 L661.0 286.0 L660.1 285.9 L658.9 285.8 L657.3 285.6 L655.0 285.5 L651.9 285.4 L648.1 285.3 L643.8 285.2 L639.3 285.1 L634.6 285.1 L630.0 285.0 L625.3 284.9 L620.3 284.9 L615.2 284.8 L610.2 284.8 L605.4 284.8 L601.0 285.0 L597.1 285.2 L593.6 285.6 L590.4 285.9 L587.1 286.4 L583.8 286.9 L580.0 287.5 L575.9 288.2 L571.5 288.9 L566.9 289.7 L562.3 290.6 L557.6 291.5 L553.0 292.5 L548.4 293.5 L543.6 294.6 L538.9 295.8 L534.1 296.9 L529.5 298.2 L525.0 299.5 L520.6 300.9 L516.3 302.3 L512.1 303.8 L507.9 305.4 L503.9 306.9 L500.0 308.5 L496.2 310.1 L492.6 311.7 L489.1 313.3 L485.7 315.0 L482.3 316.7 L479.0 318.5 L475.7 320.4 L472.6 322.3 L469.4 324.2 L466.3 326.3 L463.2 328.4 L460.0 330.5 L456.7 332.7 L453.4 334.9 L450.1 337.2 L446.7 339.6 L443.4 342.0 L440.0 344.5 L436.4 347.3 L432.4 350.4 L428.5 353.6 L424.8 356.6 L421.7 359.2 L419.5 361.0Z" fill="url(#bg2)"/>
<path d="M419.5 320.0 L421.7 318.2 L424.8 315.6 L428.5 312.6 L432.4 309.4 L436.4 306.3 L440.0 303.5 L443.4 301.0 L446.7 298.6 L450.1 296.2 L453.4 293.9 L456.7 291.7 L460.0 289.5 L463.2 287.4 L466.3 285.3 L469.4 283.2 L472.6 281.3 L475.7 279.4 L479.0 277.5 L482.3 275.7 L485.7 274.0 L489.1 272.3 L492.6 270.7 L496.2 269.1 L500.0 267.5 L503.9 265.9 L507.9 264.4 L512.1 262.8 L516.3 261.3 L520.6 259.9 L525.0 258.5 L529.5 257.2 L534.1 255.9 L538.9 254.8 L543.6 253.6 L548.4 252.5 L553.0 251.5 L557.6 250.5 L562.3 249.6 L566.9 248.7 L571.5 247.9 L575.9 247.2 L580.0 246.5 L583.8 245.9 L587.1 245.4 L590.4 244.9 L593.6 244.6 L597.1 244.2 L601.0 244.0 L605.4 243.8 L610.2 243.8 L615.2 243.8 L620.3 243.9 L625.3 243.9 L630.0 244.0 L634.6 244.1 L639.3 244.1 L643.8 244.2 L648.1 244.3 L651.9 244.4 L655.0 244.5 L657.3 244.6 L658.9 244.8 L660.1 244.9 L661.0 245.0 L661.9 245.1 L663.0 245.0 L664.3 244.6 L665.6 244.0 L666.9 243.2 L668.2 242.7 L669.6 242.5 L671.0 243.0 L672.6 244.1 L674.2 245.8 L675.9 247.8 L677.7 250.2 L679.4 252.8 L681.0 255.5 L682.6 258.5 L684.1 261.9 L685.7 265.5 L687.2 269.3 L688.6 273.0 L690.0 276.5 L691.3 279.8 L692.4 283.1 L693.6 286.3 L694.7 289.6 L695.8 292.9 L697.0 296.5 L698.4 300.5 L699.9 305.1 L701.4 309.8 L702.9 314.1 L704.1 317.8 L705.0 320.5 L705.0 361.5 L704.1 358.8 L702.9 355.1 L701.4 350.8 L699.9 346.1 L698.4 341.5 L697.0 337.5 L695.8 333.9 L694.7 330.6 L693.6 327.3 L692.4 324.1 L691.3 320.8 L690.0 317.5 L688.6 314.0 L687.2 310.3 L685.7 306.5 L684.1 302.9 L682.6 299.5 L681.0 296.5 L679.4 293.8 L677.7 291.2 L675.9 288.8 L674.2 286.8 L672.6 285.1 L671.0 284.0 L669.6 283.5 L668.2 283.7 L666.9 284.2 L665.6 285.0 L664.3 285.6 L663.0 286.0 L661.9 286.1 L661.0 286.0 L660.1 285.9 L658.9 285.8 L657.3 285.6 L655.0 285.5 L651.9 285.4 L648.1 285.3 L643.8 285.2 L639.3 285.1 L634.6 285.1 L630.0 285.0 L625.3 284.9 L620.3 284.9 L615.2 284.8 L610.2 284.8 L605.4 284.8 L601.0 285.0 L597.1 285.2 L593.6 285.6 L590.4 285.9 L587.1 286.4 L583.8 286.9 L580.0 287.5 L575.9 288.2 L571.5 288.9 L566.9 289.7 L562.3 290.6 L557.6 291.5 L553.0 292.5 L548.4 293.5 L543.6 294.6 L538.9 295.8 L534.1 296.9 L529.5 298.2 L525.0 299.5 L520.6 300.9 L516.3 302.3 L512.1 303.8 L507.9 305.4 L503.9 306.9 L500.0 308.5 L496.2 310.1 L492.6 311.7 L489.1 313.3 L485.7 315.0 L482.3 316.7 L479.0 318.5 L475.7 320.4 L472.6 322.3 L469.4 324.2 L466.3 326.3 L463.2 328.4 L460.0 330.5 L456.7 332.7 L453.4 334.9 L450.1 337.2 L446.7 339.6 L443.4 342.0 L440.0 344.5 L436.4 347.3 L432.4 350.4 L428.5 353.6 L424.8 356.6 L421.7 359.2 L419.5 361.0Z" fill="url(#bg3)"/>
<path d="M419.5 332.0 L421.7 330.2 L424.8 327.6 L428.5 324.6 L432.4 321.4 L436.4 318.3 L440.0 315.5 L443.4 313.0 L446.7 310.6 L450.1 308.2 L453.4 305.9 L456.7 303.7 L460.0 301.5 L463.2 299.4 L466.3 297.3 L469.4 295.2 L472.6 293.3 L475.7 291.4 L479.0 289.5 L482.3 287.7 L485.7 286.0 L489.1 284.3 L492.6 282.7 L496.2 281.1 L500.0 279.5 L503.9 277.9 L507.9 276.4 L512.1 274.8 L516.3 273.3 L520.6 271.9 L525.0 270.5 L529.5 269.2 L534.1 267.9 L538.9 266.8 L543.6 265.6 L548.4 264.5 L553.0 263.5 L557.6 262.5 L562.3 261.6 L566.9 260.7 L571.5 259.9 L575.9 259.2 L580.0 258.5 L583.8 257.9 L587.1 257.4 L590.4 256.9 L593.6 256.6 L597.1 256.2 L601.0 256.0 L605.4 255.8 L610.2 255.8 L615.2 255.8 L620.3 255.9 L625.3 255.9 L630.0 256.0 L634.6 256.1 L639.3 256.1 L643.8 256.2 L648.1 256.3 L651.9 256.4 L655.0 256.5 L657.3 256.6 L658.9 256.8 L660.1 256.9 L661.0 257.0 L661.9 257.1 L663.0 257.0 L664.3 256.6 L665.6 256.0 L666.9 255.2 L668.2 254.7 L669.6 254.5 L671.0 255.0 L672.6 256.1 L674.2 257.8 L675.9 259.8 L677.7 262.2 L679.4 264.8 L681.0 267.5 L682.6 270.5 L684.1 273.9 L685.7 277.5 L687.2 281.3 L688.6 285.0 L690.0 288.5 L691.3 291.8 L692.4 295.1 L693.6 298.3 L694.7 301.6 L695.8 304.9 L697.0 308.5 L698.4 312.5 L699.9 317.1 L701.4 321.8 L702.9 326.1 L704.1 329.8 L705.0 332.5 L705.0 361.5 L704.1 358.8 L702.9 355.1 L701.4 350.8 L699.9 346.1 L698.4 341.5 L697.0 337.5 L695.8 333.9 L694.7 330.6 L693.6 327.3 L692.4 324.1 L691.3 320.8 L690.0 317.5 L688.6 314.0 L687.2 310.3 L685.7 306.5 L684.1 302.9 L682.6 299.5 L681.0 296.5 L679.4 293.8 L677.7 291.2 L675.9 288.8 L674.2 286.8 L672.6 285.1 L671.0 284.0 L669.6 283.5 L668.2 283.7 L666.9 284.2 L665.6 285.0 L664.3 285.6 L663.0 286.0 L661.9 286.1 L661.0 286.0 L660.1 285.9 L658.9 285.8 L657.3 285.6 L655.0 285.5 L651.9 285.4 L648.1 285.3 L643.8 285.2 L639.3 285.1 L634.6 285.1 L630.0 285.0 L625.3 284.9 L620.3 284.9 L615.2 284.8 L610.2 284.8 L605.4 284.8 L601.0 285.0 L597.1 285.2 L593.6 285.6 L590.4 285.9 L587.1 286.4 L583.8 286.9 L580.0 287.5 L575.9 288.2 L571.5 288.9 L566.9 289.7 L562.3 290.6 L557.6 291.5 L553.0 292.5 L548.4 293.5 L543.6 294.6 L538.9 295.8 L534.1 296.9 L529.5 298.2 L525.0 299.5 L520.6 300.9 L516.3 302.3 L512.1 303.8 L507.9 305.4 L503.9 306.9 L500.0 308.5 L496.2 310.1 L492.6 311.7 L489.1 313.3 L485.7 315.0 L482.3 316.7 L479.0 318.5 L475.7 320.4 L472.6 322.3 L469.4 324.2 L466.3 326.3 L463.2 328.4 L460.0 330.5 L456.7 332.7 L453.4 334.9 L450.1 337.2 L446.7 339.6 L443.4 342.0 L440.0 344.5 L436.4 347.3 L432.4 350.4 L428.5 353.6 L424.8 356.6 L421.7 359.2 L419.5 361.0Z" fill="url(#bg4)"/>
<path d="M419.5 342.0 L421.7 340.2 L424.8 337.6 L428.5 334.6 L432.4 331.4 L436.4 328.3 L440.0 325.5 L443.4 323.0 L446.7 320.6 L450.1 318.2 L453.4 315.9 L456.7 313.7 L460.0 311.5 L463.2 309.4 L466.3 307.3 L469.4 305.2 L472.6 303.3 L475.7 301.4 L479.0 299.5 L482.3 297.7 L485.7 296.0 L489.1 294.3 L492.6 292.7 L496.2 291.1 L500.0 289.5 L503.9 287.9 L507.9 286.4 L512.1 284.8 L516.3 283.3 L520.6 281.9 L525.0 280.5 L529.5 279.2 L534.1 277.9 L538.9 276.8 L543.6 275.6 L548.4 274.5 L553.0 273.5 L557.6 272.5 L562.3 271.6 L566.9 270.7 L571.5 269.9 L575.9 269.2 L580.0 268.5 L583.8 267.9 L587.1 267.4 L590.4 266.9 L593.6 266.6 L597.1 266.2 L601.0 266.0 L605.4 265.8 L610.2 265.8 L615.2 265.8 L620.3 265.9 L625.3 265.9 L630.0 266.0 L634.6 266.1 L639.3 266.1 L643.8 266.2 L648.1 266.3 L651.9 266.4 L655.0 266.5 L657.3 266.6 L658.9 266.8 L660.1 266.9 L661.0 267.0 L661.9 267.1 L663.0 267.0 L664.3 266.6 L665.6 266.0 L666.9 265.2 L668.2 264.7 L669.6 264.5 L671.0 265.0 L672.6 266.1 L674.2 267.8 L675.9 269.8 L677.7 272.2 L679.4 274.8 L681.0 277.5 L682.6 280.5 L684.1 283.9 L685.7 287.5 L687.2 291.3 L688.6 295.0 L690.0 298.5 L691.3 301.8 L692.4 305.1 L693.6 308.3 L694.7 311.6 L695.8 314.9 L697.0 318.5 L698.4 322.5 L699.9 327.1 L701.4 331.8 L702.9 336.1 L704.1 339.8 L705.0 342.5 L705.0 361.5 L704.1 358.8 L702.9 355.1 L701.4 350.8 L699.9 346.1 L698.4 341.5 L697.0 337.5 L695.8 333.9 L694.7 330.6 L693.6 327.3 L692.4 324.1 L691.3 320.8 L690.0 317.5 L688.6 314.0 L687.2 310.3 L685.7 306.5 L684.1 302.9 L682.6 299.5 L681.0 296.5 L679.4 293.8 L677.7 291.2 L675.9 288.8 L674.2 286.8 L672.6 285.1 L671.0 284.0 L669.6 283.5 L668.2 283.7 L666.9 284.2 L665.6 285.0 L664.3 285.6 L663.0 286.0 L661.9 286.1 L661.0 286.0 L660.1 285.9 L658.9 285.8 L657.3 285.6 L655.0 285.5 L651.9 285.4 L648.1 285.3 L643.8 285.2 L639.3 285.1 L634.6 285.1 L630.0 285.0 L625.3 284.9 L620.3 284.9 L615.2 284.8 L610.2 284.8 L605.4 284.8 L601.0 285.0 L597.1 285.2 L593.6 285.6 L590.4 285.9 L587.1 286.4 L583.8 286.9 L580.0 287.5 L575.9 288.2 L571.5 288.9 L566.9 289.7 L562.3 290.6 L557.6 291.5 L553.0 292.5 L548.4 293.5 L543.6 294.6 L538.9 295.8 L534.1 296.9 L529.5 298.2 L525.0 299.5 L520.6 300.9 L516.3 302.3 L512.1 303.8 L507.9 305.4 L503.9 306.9 L500.0 308.5 L496.2 310.1 L492.6 311.7 L489.1 313.3 L485.7 315.0 L482.3 316.7 L479.0 318.5 L475.7 320.4 L472.6 322.3 L469.4 324.2 L466.3 326.3 L463.2 328.4 L460.0 330.5 L456.7 332.7 L453.4 334.9 L450.1 337.2 L446.7 339.6 L443.4 342.0 L440.0 344.5 L436.4 347.3 L432.4 350.4 L428.5 353.6 L424.8 356.6 L421.7 359.2 L419.5 361.0Z" fill="url(#bg5)"/>
<path d="M419.5 352.0 L421.7 350.2 L424.8 347.6 L428.5 344.6 L432.4 341.4 L436.4 338.3 L440.0 335.5 L443.4 333.0 L446.7 330.6 L450.1 328.2 L453.4 325.9 L456.7 323.7 L460.0 321.5 L463.2 319.4 L466.3 317.3 L469.4 315.2 L472.6 313.3 L475.7 311.4 L479.0 309.5 L482.3 307.7 L485.7 306.0 L489.1 304.3 L492.6 302.7 L496.2 301.1 L500.0 299.5 L503.9 297.9 L507.9 296.4 L512.1 294.8 L516.3 293.3 L520.6 291.9 L525.0 290.5 L529.5 289.2 L534.1 287.9 L538.9 286.8 L543.6 285.6 L548.4 284.5 L553.0 283.5 L557.6 282.5 L562.3 281.6 L566.9 280.7 L571.5 279.9 L575.9 279.2 L580.0 278.5 L583.8 277.9 L587.1 277.4 L590.4 276.9 L593.6 276.6 L597.1 276.2 L601.0 276.0 L605.4 275.8 L610.2 275.8 L615.2 275.8 L620.3 275.9 L625.3 275.9 L630.0 276.0 L634.6 276.1 L639.3 276.1 L643.8 276.2 L648.1 276.3 L651.9 276.4 L655.0 276.5 L657.3 276.6 L658.9 276.8 L660.1 276.9 L661.0 277.0 L661.9 277.1 L663.0 277.0 L664.3 276.6 L665.6 276.0 L666.9 275.2 L668.2 274.7 L669.6 274.5 L671.0 275.0 L672.6 276.1 L674.2 277.8 L675.9 279.8 L677.7 282.2 L679.4 284.8 L681.0 287.5 L682.6 290.5 L684.1 293.9 L685.7 297.5 L687.2 301.3 L688.6 305.0 L690.0 308.5 L691.3 311.8 L692.4 315.1 L693.6 318.3 L694.7 321.6 L695.8 324.9 L697.0 328.5 L698.4 332.5 L699.9 337.1 L701.4 341.8 L702.9 346.1 L704.1 349.8 L705.0 352.5 L705.0 361.5 L704.1 358.8 L702.9 355.1 L701.4 350.8 L699.9 346.1 L698.4 341.5 L697.0 337.5 L695.8 333.9 L694.7 330.6 L693.6 327.3 L692.4 324.1 L691.3 320.8 L690.0 317.5 L688.6 314.0 L687.2 310.3 L685.7 306.5 L684.1 302.9 L682.6 299.5 L681.0 296.5 L679.4 293.8 L677.7 291.2 L675.9 288.8 L674.2 286.8 L672.6 285.1 L671.0 284.0 L669.6 283.5 L668.2 283.7 L666.9 284.2 L665.6 285.0 L664.3 285.6 L663.0 286.0 L661.9 286.1 L661.0 286.0 L660.1 285.9 L658.9 285.8 L657.3 285.6 L655.0 285.5 L651.9 285.4 L648.1 285.3 L643.8 285.2 L639.3 285.1 L634.6 285.1 L630.0 285.0 L625.3 284.9 L620.3 284.9 L615.2 284.8 L610.2 284.8 L605.4 284.8 L601.0 285.0 L597.1 285.2 L593.6 285.6 L590.4 285.9 L587.1 286.4 L583.8 286.9 L580.0 287.5 L575.9 288.2 L571.5 288.9 L566.9 289.7 L562.3 290.6 L557.6 291.5 L553.0 292.5 L548.4 293.5 L543.6 294.6 L538.9 295.8 L534.1 296.9 L529.5 298.2 L525.0 299.5 L520.6 300.9 L516.3 302.3 L512.1 303.8 L507.9 305.4 L503.9 306.9 L500.0 308.5 L496.2 310.1 L492.6 311.7 L489.1 313.3 L485.7 315.0 L482.3 316.7 L479.0 318.5 L475.7 320.4 L472.6 322.3 L469.4 324.2 L466.3 326.3 L463.2 328.4 L460.0 330.5 L456.7 332.7 L453.4 334.9 L450.1 337.2 L446.7 339.6 L443.4 342.0 L440.0 344.5 L436.4 347.3 L432.4 350.4 L428.5 353.6 L424.8 356.6 L421.7 359.2 L419.5 361.0Z" fill="url(#bg6)"/>
 </g>
 <path d="M419.5 362.0 L421.7 360.2 L424.8 357.6 L428.5 354.6 L432.4 351.4 L436.4 348.3 L440.0 345.5 L443.4 343.0 L446.7 340.6 L450.1 338.2 L453.4 335.9 L456.7 333.7 L460.0 331.5 L463.2 329.4 L466.3 327.3 L469.4 325.2 L472.6 323.3 L475.7 321.4 L479.0 319.5 L482.3 317.7 L485.7 316.0 L489.1 314.3 L492.6 312.7 L496.2 311.1 L500.0 309.5 L503.9 307.9 L507.9 306.4 L512.1 304.8 L516.3 303.3 L520.6 301.9 L525.0 300.5 L529.5 299.2 L534.1 297.9 L538.9 296.8 L543.6 295.6 L548.4 294.5 L553.0 293.5 L557.6 292.5 L562.3 291.6 L566.9 290.7 L571.5 289.9 L575.9 289.2 L580.0 288.5 L583.8 287.9 L587.1 287.4 L590.4 286.9 L593.6 286.6 L597.1 286.2 L601.0 286.0 L605.4 285.8 L610.2 285.8 L615.2 285.8 L620.3 285.9 L625.3 285.9 L630.0 286.0 L634.6 286.1 L639.3 286.1 L643.8 286.2 L648.1 286.3 L651.9 286.4 L655.0 286.5 L657.3 286.6 L658.9 286.8 L660.1 286.9 L661.0 287.0 L661.9 287.1 L663.0 287.0 L664.3 286.6 L665.6 286.0 L666.9 285.2 L668.2 284.7 L669.6 284.5 L671.0 285.0 L672.6 286.1 L674.2 287.8 L675.9 289.8 L677.7 292.2 L679.4 294.8 L681.0 297.5 L682.6 300.5 L684.1 303.9 L685.7 307.5 L687.2 311.3 L688.6 315.0 L690.0 318.5 L691.3 321.8 L692.4 325.1 L693.6 328.3 L694.7 331.6 L695.8 334.9 L697.0 338.5 L698.4 342.5 L699.9 347.1 L701.4 351.8 L702.9 356.1 L704.1 359.8 L705.0 362.5" stroke="url(#blg)" stroke-width="2" fill="none" filter="url(#mod3)"/>
 <path d="M419.5 296.8 L421.7 295.0 L424.8 292.4 L428.5 289.4 L432.4 286.2 L436.4 283.1 L440.0 280.3 L443.4 277.8 L446.7 275.4 L450.1 273.0 L453.4 270.7 L456.7 268.5 L460.0 266.3 L463.2 264.2 L466.3 262.1 L469.4 260.1 L472.6 258.1 L475.7 256.2 L479.0 254.3 L482.3 252.5 L485.7 250.8 L489.1 249.1 L492.6 247.5 L496.2 245.9 L500.0 244.3 L503.9 242.7 L507.9 241.2 L512.1 239.6 L516.3 238.1 L520.6 236.7 L525.0 235.3 L529.5 234.0 L534.1 232.7 L538.9 231.6 L543.6 230.4 L548.4 229.3 L553.0 228.3 L557.6 227.3 L562.3 226.4 L566.9 225.5 L571.5 224.7 L575.9 224.0 L580.0 223.3 L583.8 222.7 L587.1 222.2 L590.4 221.7 L593.6 221.4 L597.1 221.0 L601.0 220.8 L605.4 220.6 L610.2 220.6 L615.2 220.6 L620.3 220.7 L625.3 220.7 L630.0 220.8 L634.6 220.9 L639.3 220.9 L643.8 221.0 L648.1 221.1 L651.9 221.2 L655.0 221.3 L657.3 221.4 L658.9 221.6 L660.1 221.7 L661.0 221.8 L661.9 221.9 L663.0 221.8 L664.3 221.4 L665.6 220.8 L666.9 220.1 L668.2 219.5 L669.6 219.3 L671.0 219.8 L672.6 220.9 L674.2 222.6 L675.9 224.6 L677.7 227.0 L679.4 229.6 L681.0 232.3 L682.6 235.3 L684.1 238.7 L685.7 242.3 L687.2 246.1 L688.6 249.8 L690.0 253.3 L691.3 256.6 L692.4 259.9 L693.6 263.1 L694.7 266.4 L695.8 269.7 L697.0 273.3 L698.4 277.3 L699.9 281.9 L701.4 286.6 L702.9 290.9 L704.1 294.6 L705.0 297.3" stroke="url(#tlg)" stroke-width="1" fill="none"/>
 <!-- histogram -->
 <g fill="#acacac" font-size="7.6px" stroke="#7a7a7a" stroke-width="1">
<text x="751.5" y="75.9" text-anchor="end" stroke="none">3.2e+06</text>
<line x1="755.5" y1="73.4" x2="759" y2="73.4"/>
<text x="751.5" y="106.5" text-anchor="end" stroke="none">3e+06</text>
<line x1="755.5" y1="104.0" x2="759" y2="104.0"/>
<text x="751.5" y="137.1" text-anchor="end" stroke="none">2.8e+06</text>
<line x1="755.5" y1="134.6" x2="759" y2="134.6"/>
<text x="751.5" y="167.7" text-anchor="end" stroke="none">2.6e+06</text>
<line x1="755.5" y1="165.2" x2="759" y2="165.2"/>
<text x="751.5" y="198.3" text-anchor="end" stroke="none">2.4e+06</text>
<line x1="755.5" y1="195.8" x2="759" y2="195.8"/>
<text x="751.5" y="228.9" text-anchor="end" stroke="none">2.2e+06</text>
<line x1="755.5" y1="226.4" x2="759" y2="226.4"/>
<text x="751.5" y="259.5" text-anchor="end" stroke="none">2e+06</text>
<line x1="755.5" y1="257.0" x2="759" y2="257.0"/>
<text x="751.5" y="290.1" text-anchor="end" stroke="none">1.8e+06</text>
<line x1="755.5" y1="287.6" x2="759" y2="287.6"/>
<text x="751.5" y="320.7" text-anchor="end" stroke="none">1.6e+06</text>
<line x1="755.5" y1="318.2" x2="759" y2="318.2"/>
<text x="751.5" y="351.3" text-anchor="end" stroke="none">1.4e+06</text>
<line x1="755.5" y1="348.8" x2="759" y2="348.8"/>
<text x="751.5" y="381.9" text-anchor="end" stroke="none">1.2e+06</text>
<line x1="755.5" y1="379.4" x2="759" y2="379.4"/>
<text x="751.5" y="412.5" text-anchor="end" stroke="none">1e+06</text>
<line x1="755.5" y1="410.0" x2="759" y2="410.0"/>
<text x="751.5" y="443.1" text-anchor="end" stroke="none">800000</text>
<line x1="755.5" y1="440.6" x2="759" y2="440.6"/>
<text x="751.5" y="473.7" text-anchor="end" stroke="none">600000</text>
<line x1="755.5" y1="471.2" x2="759" y2="471.2"/>
<text x="751.5" y="504.3" text-anchor="end" stroke="none">400000</text>
<line x1="755.5" y1="501.8" x2="759" y2="501.8"/>
<text x="751.5" y="534.9" text-anchor="end" stroke="none">200000</text>
<line x1="755.5" y1="532.4" x2="759" y2="532.4"/>
<text x="751.5" y="565.5" text-anchor="end" stroke="none">0</text>
<line x1="755.5" y1="563.0" x2="759" y2="563.0"/>
<text x="751.5" y="596.1" text-anchor="end" stroke="none">-200000</text>
<line x1="755.5" y1="593.6" x2="759" y2="593.6"/>
<line x1="755.5" y1="257" x2="764" y2="257"/>
 </g>
 <g stroke="#9a9a9a" stroke-width="0.8">
 </g>
 <line x1="755.5" y1="70" x2="755.5" y2="607.5" stroke="#c8c8c8" stroke-width="1"/>
 <rect x="756" y="486.4" width="50" height="76" fill="#02023e"/>
 <path d="M802 486.4 L802 548 C802 557 800 560.5 780 561.5 L756 562 L806 562.4 L806 486.4Z" fill="#2a2a90"/>
 <path d="M802 486.4 L802 548 C802 557 800 560.5 780 561.5 L756 562" fill="none" stroke="#7070d8" stroke-width="1"/>
 <line x1="756" y1="486.4" x2="806" y2="486.4" stroke="#c0c0b0" stroke-width="1"/>
 <line x1="756" y1="562.4" x2="806" y2="562.4" stroke="#c0c0b0" stroke-width="1"/>
 <line x1="801" y1="315" x2="801" y2="486" stroke="#303030" stroke-width="1"/>
 <rect x="805.6" y="76.4" width="10.6" height="531" fill="url(#lut)"/>
 <path d="M805.6 76.4 L780 486.4 M780 562.4 L805.6 601.4 L817 601.4" stroke="#a8a878" stroke-width="1" fill="none"/>
 <path d="M816.5 76.4 L827 70.5 L827 83 Z" fill="#fff"/>
 <path d="M817 601.4 L827 595 L827 608 Z" fill="none" stroke="#c8c8a0" stroke-width="1"/>
 <path d="M816.5 345 L827 339 L827 351 Z" fill="#bbb"/>
 <path d="M776.5 486.4 L780 482.5 L783.5 486.4Z M776.5 562.4 L780 566.3 L783.5 562.4Z" fill="#d0d080"/>
 <!-- buttons -->
 <rect x="721.4" y="608" width="52.4" height="16" fill="#e1e1e1"/>
 <rect x="775" y="608" width="52" height="16" fill="#e1e1e1"/>
 <rect x="773.8" y="608" width="1.2" height="16" fill="#fff"/>
 <text x="747.5" y="619" text-anchor="middle" font-size="8px" fill="#222">ROI</text>
 <text x="801" y="619" text-anchor="middle" font-size="8px" fill="#222">Menu</text>
 <!-- timeline -->
 <line x1="405" y1="641.3" x2="827" y2="641.3" stroke="#9a9a9a" stroke-width="1"/>
 <g fill="#aaaaaa" font-size="7.6px" stroke="none" clip-path="url(#tlclip)">
<text x="408.3" y="650" text-anchor="middle" stroke="none">-0.8</text>
<text x="460.3" y="650" text-anchor="middle" stroke="none">-0.6</text>
<text x="512.3" y="650" text-anchor="middle" stroke="none">-0.4</text>
<text x="564.3" y="650" text-anchor="middle" stroke="none">-0.2</text>
<text x="616.3" y="650" text-anchor="middle" stroke="none">0</text>
<text x="668.3" y="650" text-anchor="middle" stroke="none">0.2</text>
<text x="720.3" y="650" text-anchor="middle" stroke="none">0.4</text>
<text x="772.3" y="650" text-anchor="middle" stroke="none">0.6</text>
<text x="824.3" y="650" text-anchor="middle" stroke="none">0.8</text>
 </g>
 <path d="M613.5 628 L619.5 628 L616.5 632.5 Z M616.5 636.5 L620.5 641.5 L612.5 641.5 Z" fill="#d4e060"/>
 <line x1="616.5" y1="628" x2="616.5" y2="641.5" stroke="#d4e060" stroke-width="1"/>
</svg>

<!-- bottom controls -->
<div class="a" style="left:398px;top:669px;width:439px;height:29.5px;border:1px solid #e2e2e2"></div>
<div class="a" style="left:404px;top:680px;color:#222;white-space:pre;letter-spacing:-0.15px">Loaded A-scans:  2000</div>
<div class="a" style="left:486px;top:682px;width:236px;height:3px;background:#e2e2e2"></div>
<div class="a" style="left:720px;top:676px;width:8px;height:15px;background:#0078d7;border-radius:1px"></div>
<div class="a" style="left:732px;top:680px;color:#222;white-space:pre;letter-spacing:-0.2px">Selected A-scans:</div>
<div class="a" style="left:797px;top:677px;width:32.5px;height:14px;background:#fff;border:1px solid #b4b4b4"></div>
<div class="a" style="left:818px;top:678px;width:10.5px;height:12px;background:#e6e6e6"></div>
<div class="a" style="left:799px;top:680px;color:#222;white-space:pre">2000</div>
<svg class="a" style="left:818px;top:678px" width="11" height="12"><path d="M3.5 4.5l2-2 2 2zM3.5 7.5l2 2 2-2z" fill="#333"/></svg>
</div></body></html>
